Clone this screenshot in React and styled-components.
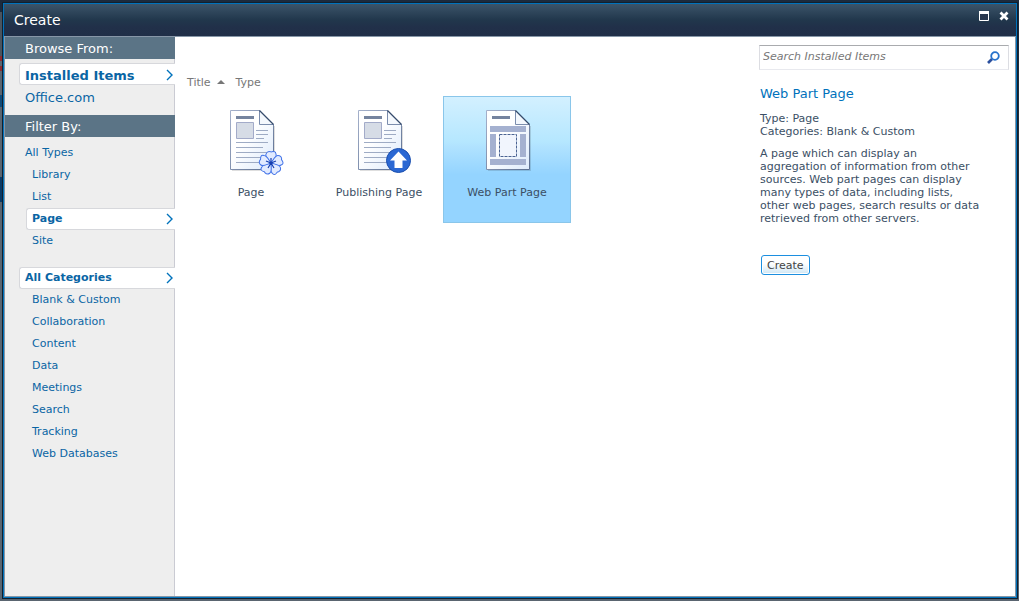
import styled, { createGlobalStyle, css } from 'styled-components';

const GlobalStyle = createGlobalStyle`
* { box-sizing: border-box; }
body {
  margin: 0;
  font-family: Verdana, 'DejaVu Sans', sans-serif;
  font-size: 11px;
  line-height: 13px;
  color: #3b4f65;
}
`;

// the dimmed page shows as a thin rim around the dialog
const Backdrop = styled.div`
display: flex;
flex-direction: column;
height: 100vh;
padding: 2px 1px 2px 2px;
background:
  linear-gradient(#1c2a3c 12px, #4a545e 12px 56px, #8c2c30 56px 61px, #5a6570 61px 66px, #8c2c30 66px 71px, #5a6570 71px 95px, #0f4a78 95px 107px, #5a6570 107px 177px, #0a3a66 177px 202px, #5a6570 202px) left / 2px 100% no-repeat,
  linear-gradient(#1c2a3c 36px, #2b3640 200px, #5a6570) right / 1px 100% no-repeat,
  linear-gradient(#1c2a3c, #1c2a3c) top / 100% 2px no-repeat,
  #5a6570;
`;

const Dialog = styled.div`
flex: 1;
display: flex;
flex-direction: column;
min-height: 0;
border: 1px solid #10202f;
`;

const Frame = styled.div`
flex: 1;
display: flex;
flex-direction: column;
min-height: 0;
border: 1px solid #0072bc;
`;

const TitleBar = styled.header`
display: flex;
align-items: center;
justify-content: space-between;
height: 33px;
padding: 0 6px 0 10px;
color: #fff;
background: linear-gradient(#3c5469, #21374c 50%, #213049 72%, #202f48);
border-bottom: 1px solid #8797a8;
`;

const TitleText = styled.h1`
margin: 0;
font-size: 14px;
font-weight: normal;
`;

const WindowButtons = styled.div`
display: flex;
gap: 8px;
padding-bottom: 8px;
`;

const IconButton = styled.button`
display: flex;
padding: 0;
border: none;
background: none;
cursor: pointer;
`;

const Body = styled.div`
flex: 1;
display: flex;
min-height: 0;
background: #fff;
border: 1px solid #8595a5;
border-top: none;
`;

const Sidebar = styled.nav`
flex: none;
width: 170px;
background: linear-gradient(#cacbd3, #cacbd3) right / 1px 100% no-repeat #eee;
`;

const NavHeader = styled.h2`
margin: 0;
padding: 2px 0 0 20px;
font-size: 13px;
font-weight: normal;
line-height: 20px;
color: #fff;
background: #5b7486;
`;

const NavList = styled.ul`
margin: 0;
padding: ${p => p.$top}px 0 ${p => p.$bottom}px;
list-style: none;
`;

const NavLink = styled.a`
display: flex;
align-items: center;
justify-content: space-between;
height: 22px;
margin-left: ${p => p.$sub ? 21 : 14}px;
padding: ${p => p.$large ? 2 : 0}px 2px ${p => p.$large ? 0 : 2}px 5px;
border: 1px solid transparent;
border-right: none;
font-size: ${p => p.$large ? 13 : 11}px;
color: #0a65a4;
text-decoration: none;
${p => p.$selected && css`
  font-weight: bold;
  background: #fff;
  border-color: #d7d8dc;
  border-radius: 3px 0 0 3px;
`}
`;

const Gallery = styled.main`
flex: 1;
padding: 39px 12px;
`;

const SortBar = styled.div`
display: flex;
align-items: center;
gap: 11px;
`;

const SortButton = styled.button`
display: flex;
align-items: center;
gap: 6px;
padding: 0;
border: none;
background: none;
font: inherit;
color: #777;
cursor: pointer;
`;

const Tiles = styled.div`
display: flex;
flex-wrap: wrap;
padding-top: 7px;
`;

const Tile = styled.button`
display: flex;
flex-direction: column;
align-items: center;
gap: 11px;
width: 128px;
height: 127px;
padding: 12px 0 0;
border: 1px solid transparent;
background: none;
font: inherit;
color: #3b4f65;
cursor: pointer;
${p => p.$selected && css`
  border-color: #8ac6ea;
  background: linear-gradient(#d3f0ff, #b5e7ff 36%, #b0e2ff 40%, #94d4ff 62%, #94d4ff);
`}
`;

const Details = styled.aside`
flex: none;
width: 256px;
padding: 8px 6px 0 0;
`;

const SearchBox = styled.form`
display: flex;
align-items: center;
height: 25px;
padding-right: 8px;
border: 1px solid #dcdde2;
border-top-color: #a9abae;
border-bottom-color: #e8e9ee;
`;

const SearchInput = styled.input`
flex: 1;
min-width: 0;
padding: 0 3px 2px;
border: none;
outline: none;
background: none;
font: italic 11px Verdana, 'DejaVu Sans', sans-serif;
&::placeholder { color: #777; opacity: 1; }
`;

const Info = styled.div`
padding: 16px 24px 0 1px;
`;

const InfoTitle = styled.h2`
margin: 0;
font-size: 13px;
font-weight: normal;
line-height: 16px;
color: #0072bc;
`;

const InfoText = styled.p`
margin: ${p => p.$gap}px 0 0;
`;

const CreateButton = styled.button`
height: 20px;
margin: 30px 1px 0;
padding: 0 5px;
border: 1px solid #1c8fe0;
border-radius: 3px;
background: linear-gradient(#fff 40%, #cfe6f4);
box-shadow: inset 0 0 0 1px #fff;
font: inherit;
color: #444;
cursor: pointer;
`;

function Chevron({ large }) {
  return <svg width="8" height={large ? 12 : 14} viewBox={large ? '0 0 8 12' : '0 -2 8 14'} fill="none" stroke="#0072bc" strokeWidth="1.4">
    <path d="M2 1l5 5-5 5" />
  </svg>
}

function Sheet({ id, children, plain }) {
  return <svg width="62" height="66" viewBox="-2 0 62 66" fill="none" overflow="visible">
    <defs>
      <linearGradient id={id} x1="0" y1="0" x2="1" y2="1">
        <stop offset=".4" stopColor="#fff" />
        <stop offset="1" stopColor="#ddeafb" />
      </linearGradient>
      <linearGradient id={id + 'edge'} x1="0" y1="0" x2="1" y2="1">
        <stop offset="0" stopColor="#a5b1cb" />
        <stop offset="1" stopColor="#5b6f91" />
      </linearGradient>
    </defs>
    <path d="M10 61.500h42.500V17" stroke="#000" strokeOpacity=".13" />
    <path d="M8.500 1.500h29l14 14v45h-43z" fill={`url(#${id})`} stroke={`url(#${id}edge)`} />
    <path d="M37.500 1.500v14h14z" fill="#f4f8fd" stroke="#7b8dad" />
    <path d="M37.500 1.500l14 14" stroke="#354b6b" strokeWidth="1.200" />
    <path d="M14 8.500h18" stroke="#75849f" strokeWidth="3" />
    {!plain && <>
      <path d="M14.500 13.500h17v16h-17z" fill="#d6dce6" stroke="#a3abc9" />
      <path d="M34 21.500h12M34 25.500h12M34 29.500h8M14 33.500h32M14 38.500h27M14 43.500h32M14 48.500h27M14 53.500h25" stroke="#9eabc4" />
    </>}
    {children}
  </svg>
}

function PageIcon() {
  return <Sheet id="page">
    <g transform="translate(49 54)" fill="#e2ebff" stroke="#4273e8">
      {[0, 72, 144, 216, 288].map(a => <path key={a} transform={`rotate(${a})`} d="M0 0C-2-3-6-6-5-9Q-4-12-1-11.500L0-11L2-11.500Q5-12 5-9C6-6 2-3 0 0z" />)}
    </g>
    <path d="M49 54v-5M49 54l5-2M49 54l3 5M49 54l-3 5M49 54l-5-2" stroke="#173fae" strokeWidth="1.200" />
    <circle cx="49" cy="54" r="1.500" fill="#173fae" />
  </Sheet>
}

function PublishingIcon() {
  return <Sheet id="publishing">
    <circle cx="48.500" cy="51.500" r="12" fill="#2b68d3" stroke="#1b4fae" />
    <path d="M48.500 42.500l8.500 9h-4.500v7.500h-8v-7.500h-4.500z" fill="#fff" />
  </Sheet>
}

function WebPartIcon() {
  return <Sheet id="webpart" plain>
    <path d="M12 17h36v6H12zM12 50h36v6H12zM12 25h6v23h-6zM42 25h6v23h-6z" fill="#a5b1d0" />
    <path d="M21.500 25.500h17v22h-17z" fill="#f1f5fd" stroke="#4a6392" strokeDasharray="3 1" />
  </Sheet>
}

function MaximizeIcon() {
  return <svg width="12" height="12" viewBox="0 0 12 12">
    <path d="M1.500 1.500h9v9h-9z" fill="#29384f" stroke="#fff" />
    <path d="M1 2.500h10" stroke="#fff" strokeWidth="3" />
  </svg>
}

function CloseIcon() {
  return <svg width="12" height="12" viewBox="0 0 12 12">
    <path d="M2.500 2.500l7 7M9.500 2.500l-7 7" stroke="#fff" strokeWidth="2.800" />
  </svg>
}

function SearchIcon() {
  return <svg width="13" height="13" viewBox="0 0 13 13" fill="none">
    <path d="M1 12l4-4" stroke="#2b4f9e" strokeWidth="2.600" />
    <circle cx="8" cy="5" r="3.800" stroke="#2672cb" strokeWidth="1.800" />
  </svg>
}

const sources = [
  { name: 'Installed Items', selected: true, large: true },
  { name: 'Office.com', large: true },
];

const types = [
  { name: 'All Types' },
  { name: 'Library', sub: true },
  { name: 'List', sub: true },
  { name: 'Page', sub: true, selected: true },
  { name: 'Site', sub: true },
];

const categories = [
  { name: 'All Categories', selected: true },
  ...['Blank & Custom', 'Collaboration', 'Content', 'Data', 'Meetings', 'Search', 'Tracking', 'Web Databases']
    .map(name => ({ name, sub: true })),
];

const templates = [
  { name: 'Page', Icon: PageIcon },
  { name: 'Publishing Page', Icon: PublishingIcon },
  { name: 'Web Part Page', Icon: WebPartIcon, selected: true },
];

function Nav({ items, top = 0, bottom = 0 }) {
  return <NavList $top={top} $bottom={bottom}>
    {items.map(o => <li key={o.name}>
      <NavLink href="#" $sub={o.sub} $large={o.large} $selected={o.selected}>
        {o.name}
        {o.selected && <Chevron large={o.large} />}
      </NavLink>
    </li>)}
  </NavList>
}

export default function App() {
  return <Backdrop>
    <GlobalStyle />
    <Dialog role="dialog" aria-labelledby="dialog-title">
      <Frame>
        <TitleBar>
          <TitleText id="dialog-title">Create</TitleText>
          <WindowButtons>
            <IconButton aria-label="Maximize"><MaximizeIcon /></IconButton>
            <IconButton aria-label="Close"><CloseIcon /></IconButton>
          </WindowButtons>
        </TitleBar>
        <Body>
          <Sidebar>
            <NavHeader>Browse From:</NavHeader>
            <Nav items={sources} top={4} bottom={8} />
            <NavHeader>Filter By:</NavHeader>
            <Nav items={types} top={5} bottom={15} />
            <Nav items={categories} />
          </Sidebar>
          <Gallery>
            <SortBar>
              <SortButton>
                Title
                <svg width="8" height="6" viewBox="0 0 8 6"><path d="M0 4l4-4 4 4z" fill="#777" /></svg>
              </SortButton>
              <SortButton>Type</SortButton>
            </SortBar>
            <Tiles>
              {templates.map(({ name, Icon, selected }) => <Tile key={name} $selected={selected}>
                <Icon />
                {name}
              </Tile>)}
            </Tiles>
          </Gallery>
          <Details>
            <SearchBox>
              <SearchInput aria-label="Search Installed Items" placeholder="Search Installed Items" />
              <IconButton aria-label="Search"><SearchIcon /></IconButton>
            </SearchBox>
            <Info>
              <InfoTitle>Web Part Page</InfoTitle>
              <InfoText $gap={10}>
                Type: Page<br />
                Categories: Blank &amp; Custom
              </InfoText>
              <InfoText $gap={9}>
                A page which can display an aggregation of information from other sources. Web part pages
                can display many types of data, including lists, other web pages, search results or data
                retrieved from other servers.
              </InfoText>
              <CreateButton>Create</CreateButton>
            </Info>
          </Details>
        </Body>
      </Frame>
    </Dialog>
  </Backdrop>
}
